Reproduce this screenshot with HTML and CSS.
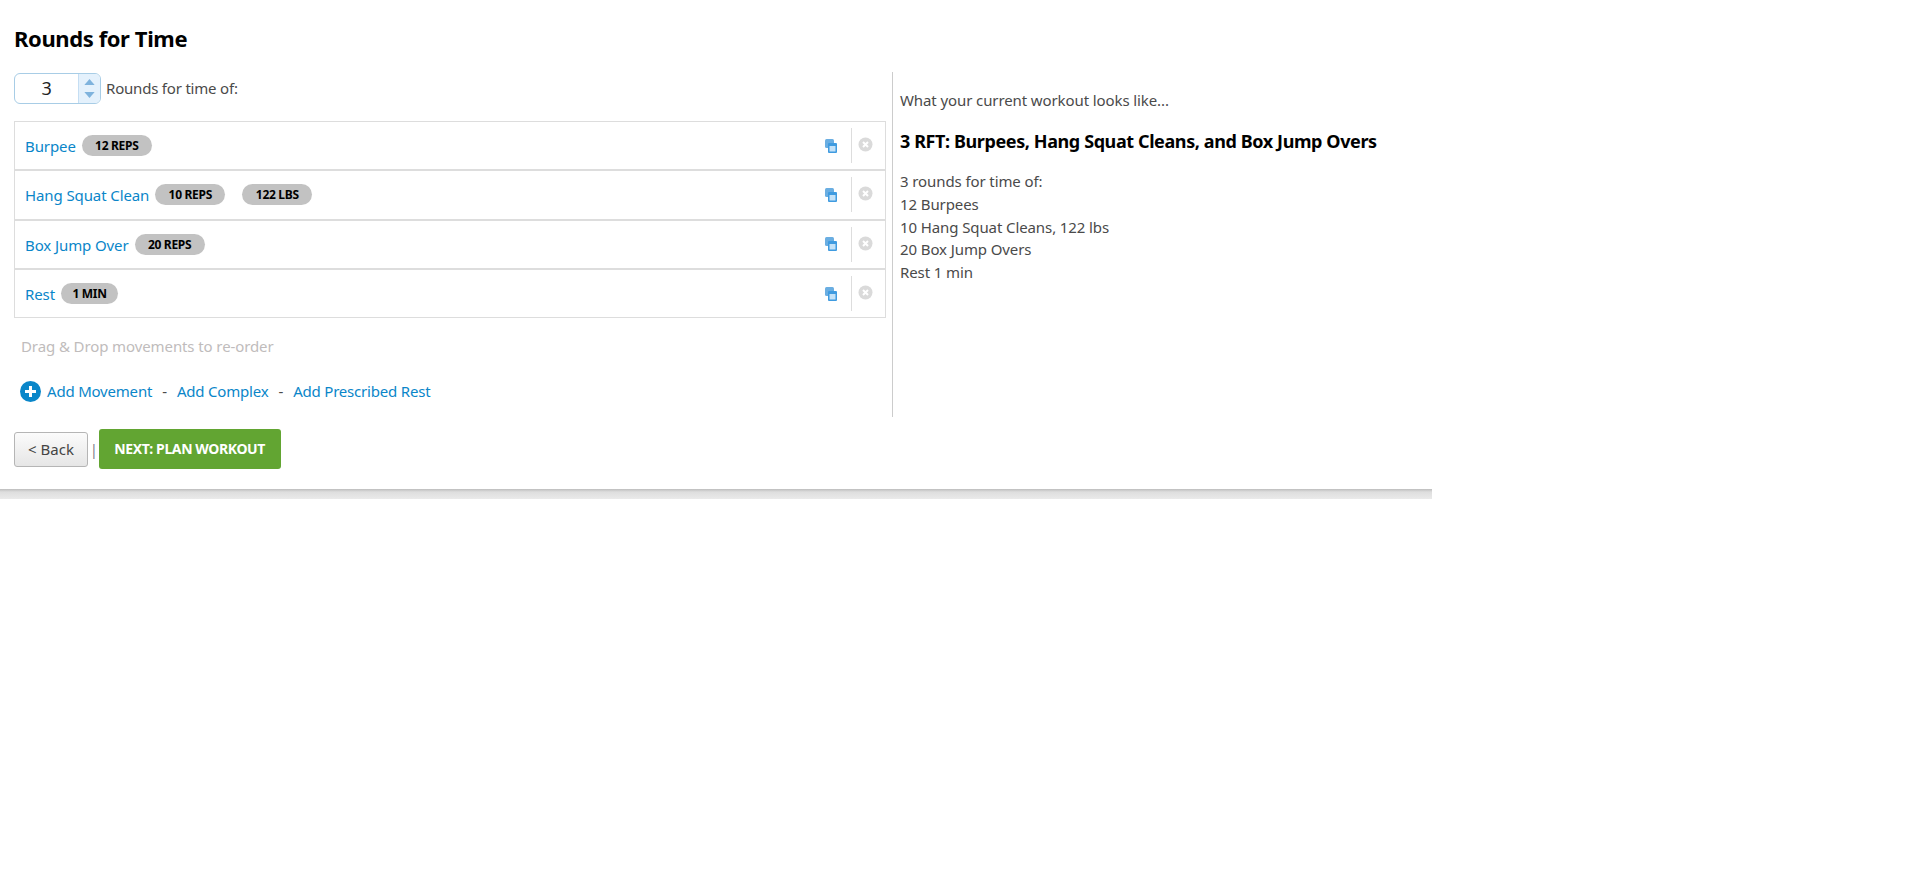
FILE: index.html
```html
<!DOCTYPE html>
<html lang="en">
<head>
<meta charset="utf-8">
<title>Rounds for Time</title>
<link rel="stylesheet" href="styles.css">
</head>
<body>
<div class="panel">
  <h1 class="title">Rounds for Time</h1>
  <div class="cols">
    <div class="left">
      <div class="rounds">
        <div class="spinner">
          <span class="spin-value">3</span>
          <span class="spin-btns">
            <svg class="arrow" width="12" height="7" viewBox="0 0 12 7"><path d="M6 0l6 7H0z"/></svg>
            <svg class="arrow" width="12" height="7" viewBox="0 0 12 7"><path d="M0 0h12L6 7z"/></svg>
          </span>
        </div>
        <span class="rounds-label">Rounds for time of:</span>
      </div>
      <ul class="moves">
        <li class="move">
          <a class="link">Burpee</a><span class="pill">12 REPS</span>
          <span class="actions">
            <svg class="copy" width="12" height="14" viewBox="0 0 12 14"><rect x="0" y="0" width="9" height="9" rx="1.5" fill="#6aaee2"/><rect x="3" y="4" width="9" height="10" rx="1" fill="#3f9be0"/><rect x="4.5" y="7" width="6" height="5.5" fill="#c4e2f8"/></svg>
            <span class="sep"></span>
            <svg class="close" width="15" height="15" viewBox="0 0 15 15"><circle cx="7.5" cy="7.5" r="7" fill="#dadada"/><path d="M5 5l5 5M10 5l-5 5" stroke="#fff" stroke-width="2"/></svg>
          </span>
        </li>
        <li class="move">
          <a class="link">Hang Squat Clean</a><span class="pill">10 REPS</span><span class="pill pill-next">122 LBS</span>
          <span class="actions">
            <svg class="copy" width="12" height="14" viewBox="0 0 12 14"><rect x="0" y="0" width="9" height="9" rx="1.5" fill="#6aaee2"/><rect x="3" y="4" width="9" height="10" rx="1" fill="#3f9be0"/><rect x="4.5" y="7" width="6" height="5.5" fill="#c4e2f8"/></svg>
            <span class="sep"></span>
            <svg class="close" width="15" height="15" viewBox="0 0 15 15"><circle cx="7.5" cy="7.5" r="7" fill="#dadada"/><path d="M5 5l5 5M10 5l-5 5" stroke="#fff" stroke-width="2"/></svg>
          </span>
        </li>
        <li class="move">
          <a class="link">Box Jump Over</a><span class="pill">20 REPS</span>
          <span class="actions">
            <svg class="copy" width="12" height="14" viewBox="0 0 12 14"><rect x="0" y="0" width="9" height="9" rx="1.5" fill="#6aaee2"/><rect x="3" y="4" width="9" height="10" rx="1" fill="#3f9be0"/><rect x="4.5" y="7" width="6" height="5.5" fill="#c4e2f8"/></svg>
            <span class="sep"></span>
            <svg class="close" width="15" height="15" viewBox="0 0 15 15"><circle cx="7.5" cy="7.5" r="7" fill="#dadada"/><path d="M5 5l5 5M10 5l-5 5" stroke="#fff" stroke-width="2"/></svg>
          </span>
        </li>
        <li class="move">
          <a class="link">Rest</a><span class="pill pill-short">1 MIN</span>
          <span class="actions">
            <svg class="copy" width="12" height="14" viewBox="0 0 12 14"><rect x="0" y="0" width="9" height="9" rx="1.5" fill="#6aaee2"/><rect x="3" y="4" width="9" height="10" rx="1" fill="#3f9be0"/><rect x="4.5" y="7" width="6" height="5.5" fill="#c4e2f8"/></svg>
            <span class="sep"></span>
            <svg class="close" width="15" height="15" viewBox="0 0 15 15"><circle cx="7.5" cy="7.5" r="7" fill="#dadada"/><path d="M5 5l5 5M10 5l-5 5" stroke="#fff" stroke-width="2"/></svg>
          </span>
        </li>
      </ul>
      <p class="hint">Drag &amp; Drop movements to re-order</p>
      <div class="adds">
        <svg class="plus" width="21" height="21" viewBox="0 0 21 21"><circle cx="10.5" cy="10.5" r="10.5" fill="#0a86c9"/><path d="M10.5 5v11M5 10.5h11" stroke="#fff" stroke-width="3"/></svg>
        <a class="link">Add Movement</a><span class="dash">-</span>
        <a class="link">Add Complex</a><span class="dash">-</span>
        <a class="link">Add Prescribed Rest</a>
      </div>
    </div>
    <div class="right">
      <p class="lead">What your current workout looks like...</p>
      <h2 class="wod-title">3 RFT: Burpees, Hang Squat Cleans, and Box Jump Overs</h2>
      <div class="wod">
        <div>3 rounds for time of:</div>
        <div>12 Burpees</div>
        <div>10 Hang Squat Cleans, 122 lbs</div>
        <div>20 Box Jump Overs</div>
        <div>Rest 1 min</div>
      </div>
    </div>
  </div>
  <div class="footer">
    <button class="back">&lt; Back</button>
    <span class="bar">|</span>
    <button class="next">NEXT: PLAN WORKOUT</button>
  </div>
</div>
<div class="shadow"></div>
</body>
</html>
```
FILE: styles.css
```css
* { box-sizing: border-box; }
body {
  margin: 0;
  font-family: "Noto Sans", "Liberation Sans", sans-serif;
  font-size: 15px;
  letter-spacing: -0.1px;
  color: #4a4a4a;
  background: #fff;
}
.panel { width: 1432px; height: 489px; padding: 21px 0 0 14px; }
.title { margin: 0; font-size: 22px; line-height: 34px; font-weight: 700; color: #000; letter-spacing: -0.4px; }
.cols { display: flex; margin-top: 17px; height: 345px; }
.left { width: 879px; border-right: 1px solid #ccc; }
.rounds { display: flex; align-items: center; height: 31px; margin-top: 1px; }
.spinner {
  display: flex; width: 87px; height: 31px; border: 1px solid #a8cde6; border-radius: 6px; overflow: hidden;
}
.spin-value { flex: 1; text-align: center; font-size: 18px; line-height: 29px; color: #222; }
.spin-btns {
  width: 22px; background: #e4f1fc; border-left: 1px solid #c5def3;
  display: flex; flex-direction: column; align-items: center; justify-content: center; gap: 7px;
}
.arrow { fill: #7fb3dd; display: block; width: 11px; height: 6px; }
.rounds-label { margin-left: 5px; padding-bottom: 2px; letter-spacing: -0.2px; }
.moves { list-style: none; margin: 17px 0 0; padding: 0; width: 872px; }
.move {
  display: flex; align-items: center; height: 49.3px; padding-left: 10px;
  border: 1px solid #ddd;
}
.link { color: #0a86c9; }
.move .link { padding-top: 1px; }
.adds .link { letter-spacing: -0.2px; }
.pill {
  margin-left: 6px; height: 21px; width: 70px; border-radius: 11px; background: #c2c2c2;
  color: #000; font-size: 12px; font-weight: 700; line-height: 21px; text-align: center; letter-spacing: -0.3px;
}
.pill-next { margin-left: 17px; }
.pill-short { width: 57px; }
.actions { margin-left: auto; display: flex; align-items: center; height: 37px; margin-right: 12px; }
.copy { margin-right: 14px; }
.sep { width: 1px; height: 35px; background: #ddd; }
.close { margin-left: 6px; margin-top: -2px; }
.hint { margin: 18px 0 0 7px; color: #c0bcbc; line-height: 20px; }
.adds { display: flex; align-items: center; margin: 24px 0 0 6px; height: 22px; }
.plus { margin-right: 6px; }
.dash { margin: 0 10px; }
.right { padding-left: 7px; }
.lead { margin: 18px 0 0; line-height: 20px; }
.wod-title { margin: 18px 0 0; font-size: 18px; line-height: 26px; font-weight: 700; color: #000; letter-spacing: -0.4px; }
.wod { margin-top: 16px; line-height: 22.8px; }
.footer { display: flex; align-items: center; margin-top: 12px; height: 40px; }
.back {
  width: 74px; height: 35px; padding: 0; border: 1px solid #b5b5b5; border-radius: 3px;
  background: linear-gradient(#fbfbfb, #e6e6e6); color: #444; font: inherit;
}
.bar { margin: 0 1px 0 2px; color: #778; font-size: 14px; }
.next {
  width: 182px; height: 40px; padding: 0 0 2px; border: 0; border-radius: 3px; background: #62a532;
  color: #fff; font: inherit; font-weight: 700; font-size: 14px; letter-spacing: -0.4px;
}
.shadow { width: 1432px; height: 10px; background: linear-gradient(#bdbdbd 0, #dedede 30%, #eaeaea 100%); }
```
